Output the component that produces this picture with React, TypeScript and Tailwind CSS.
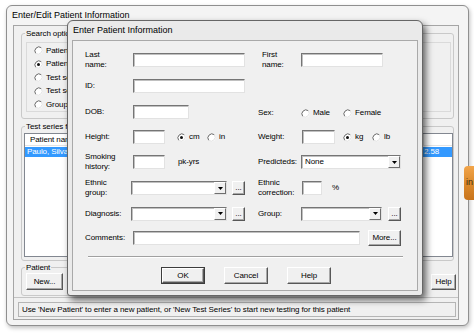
import React from 'react';

type P = { className?: string; children?: React.ReactNode };

function Radio({ checked = false }: { checked?: boolean }) {
  return (
    <svg width="9" height="9" viewBox="0 0 9 9" className="shrink-0">
      <circle cx="4.5" cy="4.5" r="4" fill="#fff" />
      <path d="M7.3 1.7A4 4 0 0 0 1.7 7.3" fill="none" stroke="#666" strokeWidth="1" />
      <path d="M1.7 7.3A4 4 0 0 0 7.3 1.7" fill="none" stroke="#e2e2e2" strokeWidth="1" />
      {checked && <circle cx="4.5" cy="4.5" r="1.5" fill="#111" />}
    </svg>
  );
}

function Field({ className = '', children }: P) {
  return (
    <div
      className={`h-[14px] shrink-0 border border-t-[#757575] border-l-[#757575] border-r-[#e2e2e2] border-b-[#e2e2e2] bg-white shadow-[inset_1px_1px_0_#c0c0c0] ${className}`}
    >
      {children}
    </div>
  );
}

function Select({ className = '', value = '' }: { className?: string; value?: string }) {
  return (
    <Field className={`flex items-stretch ${className}`}>
      <span className="flex-1 pl-[3px] leading-[12px]">{value}</span>
      <span className="flex w-[12px] items-center justify-center border border-t-white border-l-white border-r-[#6e6e6e] border-b-[#6e6e6e] bg-[#f0f0f0]">
        <svg width="5" height="3" viewBox="0 0 5 3">
          <path d="M0 0h5L2.5 3z" fill="#000" />
        </svg>
      </span>
    </Field>
  );
}

function Btn({ className = '', children }: P) {
  return (
    <button
      className={`flex shrink-0 items-center justify-center border border-t-white border-l-white border-r-[#575757] border-b-[#575757] bg-[#f0f0f0] shadow-[inset_-1px_-1px_0_#a8a8a8] ${className}`}
    >
      {children}
    </button>
  );
}

function Lbl({ className = '', children }: P) {
  return <div className={`shrink-0 leading-[10px] ${className}`}>{children}</div>;
}

function RadioItem({ label, checked = false, className = '' }: { label: string; checked?: boolean; className?: string }) {
  return (
    <div className={`flex shrink-0 items-center gap-[3px] ${className}`}>
      <Radio checked={checked} />
      <span>{label}</span>
    </div>
  );
}

function Dialog() {
  return (
    <div className="absolute left-[67px] top-[20px] flex h-[276px] w-[356px] flex-col rounded-t-[6px] rounded-b-[3px] border border-[#666] bg-[#eaeaea] shadow-[3px_4px_7px_rgba(0,0,0,0.6)]">
      <div className="flex h-[19px] items-center pl-[5px] text-[9px]">Enter Patient Information</div>
      <div className="mx-[4px] mb-[4px] flex flex-1 flex-col border border-[#a9a9a9] bg-[#f0f0f0] pl-[12px] text-[8px] tracking-[-0.1px]">
        {/* names */}
        <div className="mt-[9px] flex h-[20px] items-center">
          <div className="flex w-[173px] items-center">
            <Lbl className="w-[48px]">Last<br />name:</Lbl>
            <Field className="w-[112px]" />
          </div>
          <Lbl className="ml-[4px] w-[39px]">First<br />name:</Lbl>
          <Field className="w-[82px]" />
        </div>
        <div className="mt-[8px] flex h-[15px] items-center">
          <Lbl className="w-[48px]">ID:</Lbl>
          <Field className="w-[112px]" />
        </div>
        <div className="mt-[11px] flex h-[15px] items-center">
          <div className="flex w-[173px] items-center">
            <Lbl className="w-[48px]">DOB:</Lbl>
            <Field className="w-[56px]" />
          </div>
          <div className="mt-[3px] flex items-center">
            <Lbl className="w-[43px]">Sex:</Lbl>
            <RadioItem label="Male" className="w-[42px]" />
            <RadioItem label="Female" />
          </div>
        </div>
        <div className="mt-[11px] flex h-[14px] items-center">
          <div className="flex w-[173px] items-center">
            <Lbl className="w-[48px]">Height:</Lbl>
            <Field className="w-[32px]" />
            <RadioItem label="cm" checked className="ml-[12px] w-[30px]" />
            <RadioItem label="in" />
          </div>
          <Lbl className="w-[44px]">Weight:</Lbl>
          <Field className="w-[33px]" />
          <RadioItem label="kg" checked className="ml-[8px] w-[29px]" />
          <RadioItem label="lb" />
        </div>
        <div className="mt-[8px] flex h-[20px] items-center">
          <div className="flex w-[173px] items-center">
            <Lbl className="w-[48px]">Smoking<br />history:</Lbl>
            <Field className="w-[32px]" />
            <span className="ml-[13px]">pk-yrs</span>
          </div>
          <Lbl className="w-[43px]">Predicteds:</Lbl>
          <Select className="w-[100px]" value="None" />
        </div>
        <div className="mt-[6px] flex h-[20px] items-center">
          <div className="flex w-[173px] items-center">
            <Lbl className="w-[46px]">Ethnic<br />group:</Lbl>
            <Select className="w-[96px]" />
            <Btn className="ml-[5px] h-[14px] w-[13px] leading-[8px]">...</Btn>
          </div>
          <Lbl className="w-[44px]">Ethnic<br />correction:</Lbl>
          <Field className="w-[20px]" />
          <span className="ml-[10px]">%</span>
        </div>
        <div className="mt-[8px] flex h-[15px] items-center">
          <div className="flex w-[173px] items-center">
            <Lbl className="w-[46px]">Diagnosis:</Lbl>
            <Select className="w-[96px]" />
            <Btn className="ml-[5px] h-[14px] w-[13px] leading-[8px]">...</Btn>
          </div>
          <Lbl className="w-[43px]">Group:</Lbl>
          <Select className="w-[81px]" />
          <Btn className="ml-[6px] h-[14px] w-[13px] leading-[8px]">...</Btn>
        </div>
        <div className="mt-[9px] flex h-[16px] items-center">
          <Lbl className="w-[48px]">Comments:</Lbl>
          <Field className="w-[227px]" />
          <Btn className="ml-[8px] h-[16px] w-[33px]">More...</Btn>
        </div>
        <div className="ml-[3px] mt-[10px] w-[315px] border-t border-b border-t-[#a0a0a0] border-b-white" />
        <div className="ml-[76px] mt-[9px] flex h-[17px] gap-[19px]">
          <div className="border border-[#3c3c3c]">
            <Btn className="h-[15px] w-[42px]">OK</Btn>
          </div>
          <Btn className="h-[17px] w-[44px]">Cancel</Btn>
          <Btn className="h-[17px] w-[44px]">Help</Btn>
        </div>
      </div>
    </div>
  );
}

export default function App() {
  return (
    <div className="relative h-[333px] w-[474px] overflow-hidden bg-white pl-[6px] pt-[5px] font-['Liberation_Sans',Arial,sans-serif] text-black">
      <div className="flex h-[321px] w-[463px] flex-col rounded-[6px] border border-[#8f8f8f] bg-[#f4f4f4] shadow-[1px_2px_4px_rgba(0,0,0,0.25)]">
        <div className="flex h-[19px] items-center pl-[5px] text-[9px]">Enter/Edit Patient Information</div>
        <div className="mb-[5px] ml-[6px] mr-[9px] flex flex-1 flex-col border border-[#a5a5a5] bg-[#f0f0f0] text-[8px] tracking-[-0.1px]">
          <div className="flex h-[272px] flex-col border-b border-[#c4c4c4]">
            <fieldset className="ml-[7px] mt-[2px] h-[91px] w-[433px] rounded-[3px] border border-[#c9c9c9] pl-[4px] pr-[2px]">
              <legend className="-ml-[1px] px-[1px] leading-[11px]">Search options</legend>
              <div className="mt-[3px] h-[70px] border border-[#dadada] pl-[7px] pt-[1px]">
                {['Patient', 'Patient ID', 'Test series', 'Test set', 'Group'].map((t, i) => (
                  <div key={t} className="flex h-[13.5px] items-center gap-[3px]">
                    <Radio checked={i === 1} />
                    <span>{t}</span>
                  </div>
                ))}
              </div>
            </fieldset>
            <fieldset className="ml-[7px] mt-[2px] h-[140px] w-[433px] rounded-[3px] border border-[#c9c9c9] pl-[2px]">
              <legend className="ml-[1px] px-[1px] leading-[11px]">Test series for patient</legend>
              <div className="mt-[1px] h-[124px] border border-[#828790] bg-white">
                <div className="flex h-[12px] border-b border-[#e3e3e3]">
                  <div className="flex w-[120px] items-center border-r border-[#e0e0e0] pl-[5px]">Patient name</div>
                  <div className="flex-1" />
                  <div className="w-[29px] border-l border-[#e0e0e0]" />
                </div>
                <div className="mt-[1px] flex h-[10px] items-center bg-[#3399ff] text-white">
                  <span className="flex-1 pl-[2px]">Paulo, Silva</span>
                  <span className="w-[29px] pl-[1px]">2.58</span>
                </div>
              </div>
            </fieldset>
            <div className="ml-[7px] mr-[2px] mt-[1px] flex h-[34px]">
              <fieldset className="h-[34px] w-[200px] rounded-[3px] border border-[#c9c9c9] pl-[4px]">
                <legend className="-ml-[1px] px-[1px] leading-[11px]">Patient</legend>
                <Btn className="h-[17px] w-[37px]">New...</Btn>
              </fieldset>
              <Btn className="ml-auto mt-[12px] h-[16px] w-[25px]">Help</Btn>
            </div>
          </div>
          <div className="ml-[4px] mt-[4px] flex h-[15px] w-[438px] items-center border border-[#b5b5b5] pl-[3px]">
            Use 'New Patient' to enter a new patient, or 'New Test Series' to start new testing for this patient
          </div>
        </div>
      </div>
      <Dialog />
      <div className="absolute left-[464px] top-[166px] flex h-[34px] w-[16px] items-center rounded-[4px] bg-linear-to-b from-[#f2a54a] via-[#dc8a2c] to-[#c8741c] pl-[2px] text-[9px] text-[#3a2a10]">
        in
      </div>
    </div>
  );
}
